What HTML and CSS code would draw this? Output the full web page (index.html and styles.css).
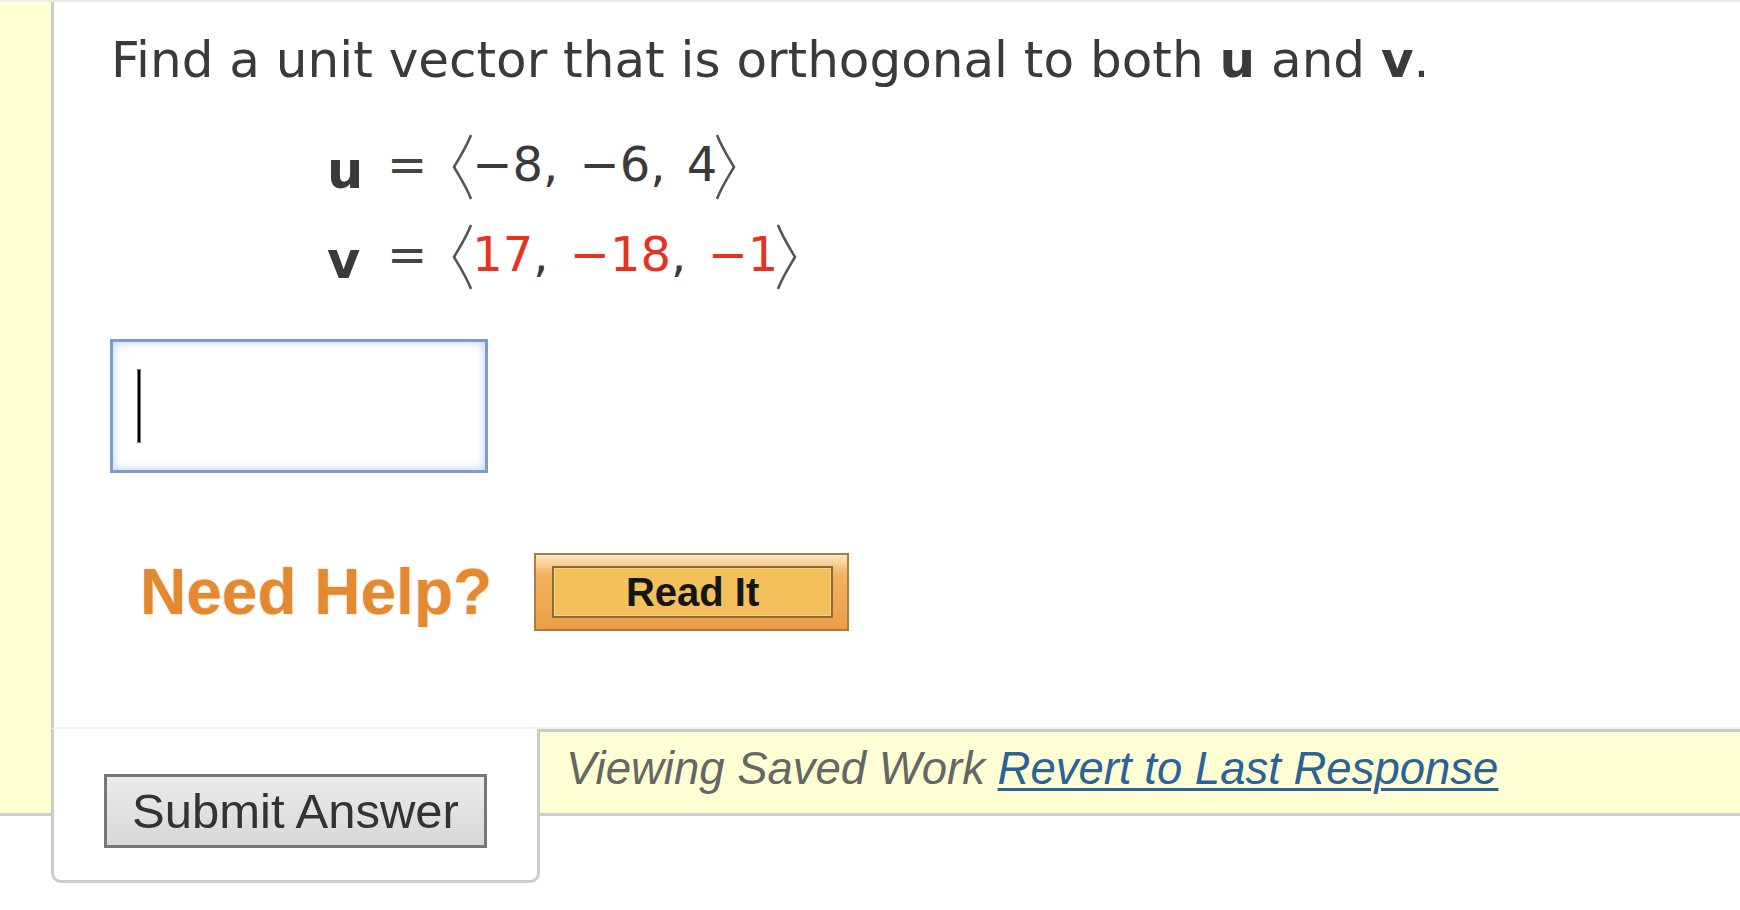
FILE: index.html
```html
<!DOCTYPE html>
<html lang="en">
<head>
    <meta charset="UTF-8">
    <meta name="viewport" content="width=device-width, initial-scale=1.0">
    <title>Unit Vector Question</title>
    <link rel="stylesheet" href="styles.css">
</head>
<body>
    <div class="frame">
        <div class="gutter"></div>
        <div class="main">
            <div class="question">
                <p class="prompt">Find a unit vector that is orthogonal to both <b>u</b> and <b>v</b>.</p>

                <div class="eq first"><span class="var">u</span><span class="eqsign">=</span><svg class="bracket" width="22" height="66" viewBox="0 0 22 66"><path d="M20 1 C15 14 7 26 3 33 C7 40 15 52 20 65"/></svg><span>−8, −6, 4</span><svg class="bracket close" width="22" height="66" viewBox="0 0 22 66"><path d="M2 1 C7 14 15 26 19 33 C15 40 7 52 2 65"/></svg></div>
                <div class="eq"><span class="var">v</span><span class="eqsign">=</span><svg class="bracket" width="22" height="66" viewBox="0 0 22 66"><path d="M20 1 C15 14 7 26 3 33 C7 40 15 52 20 65"/></svg><span class="num">17</span>, <span class="num">−18</span>, <span class="num">−1</span><svg class="bracket close" width="22" height="66" viewBox="0 0 22 66"><path d="M2 1 C7 14 15 26 19 33 C15 40 7 52 2 65"/></svg></div>

                <div class="answer-box"><span class="caret"></span></div>

                <div class="help">
                    <span class="need-help">Need Help?</span>
                    <button class="read-it"><span>Read It</span></button>
                </div>
            </div>

            <div class="footer">
                <div class="tab">
                    <button class="submit">Submit Answer</button>
                </div>
                <div class="saved">Viewing Saved Work <a href="#">Revert to Last Response</a></div>
            </div>
        </div>
    </div>
</body>
</html>
```

FILE: styles.css
```css
body {
    margin: 0;
    background-color: #fff;
    font-family: "DejaVu Sans", Verdana, sans-serif;
    color: #3a3a3a;
}
.frame {
    display: flex;
    align-items: flex-start;
    border-top: 2px solid #ededE4;
}
.gutter {
    width: 51px;
    height: 811px;
    background-color: #ffffd3;
    border-bottom: 3px solid #cccccc;
    flex-shrink: 0;
}
.main {
    flex: 1;
}
.question {
    box-sizing: border-box;
    height: 727px;
    padding: 28px 0 0 54px;
    border-left: 3px solid #cccccc;
    border-bottom: 2px solid #f1f1f1;
    background-color: #fff;
}
.prompt {
    margin: 0 0 0 3px;
    font-size: 50px;
    line-height: 60px;
}
.eq {
    padding-left: 219px;
    font-size: 48px;
    line-height: 90px;
    word-spacing: 6px;
    white-space: nowrap;
}
.eq.first {
    margin-top: 29px;
}
.var {
    display: inline-block;
    width: 60px;
    font-weight: bold;
    font-size: 51px;
    line-height: 1;
    vertical-align: -7px;
}
.eqsign {
    color: #444;
}
.bracket {
    vertical-align: -19px;
    margin-left: 24px;
    margin-right: -1px;
}
.bracket.close {
    margin-left: -2px;
    margin-right: 0;
}
.bracket path {
    fill: none;
    stroke: #555;
    stroke-width: 2.6;
}
.num {
    color: #e6321f;
}
.answer-box {
    box-sizing: border-box;
    width: 378px;
    height: 134px;
    margin: 40px 0 0 2px;
    padding: 27px 0 0 24px;
    border: 3px solid #7d9dc6;
    box-shadow: inset 0 0 7px 2px #c7dcf4;
    background-color: #fff;
}
.caret {
    display: block;
    width: 2px;
    height: 72px;
    background-color: #000;
    border: 1px solid #777;
}
.help {
    display: flex;
    align-items: center;
    margin-top: 80px;
    padding-left: 32px;
}
.need-help {
    font-family: "Liberation Sans", Arial, sans-serif;
    font-weight: bold;
    font-size: 64px;
    color: #e4892f;
    text-shadow: 0 0 2px rgba(228, 137, 47, 0.5);
}
.read-it {
    display: flex;
    box-sizing: border-box;
    width: 315px;
    height: 78px;
    margin-left: 42px;
    padding: 11px 14px 11px 16px;
    border: 2px solid #b27d3c;
    background: linear-gradient(#fde7c6 0%, #f2b462 25%, #eb9e47 100%);
    cursor: pointer;
}
.read-it span {
    flex: 1;
    display: flex;
    justify-content: center;
    align-items: center;
    border: 2px solid #8a6b3b;
    box-shadow: inset 0 0 0 1px #f7d584;
    background-color: #f2c15b;
    font-family: "Liberation Sans", Arial, sans-serif;
    font-weight: bold;
    font-size: 40px;
    color: #151515;
}
.footer {
    display: flex;
    align-items: flex-start;
}
.tab {
    box-sizing: border-box;
    width: 489px;
    padding: 45px 50px 32px 50px;
    border: 3px solid #cccccc;
    border-top: none;
    border-radius: 0 0 10px 10px;
    background-color: #fff;
    flex-shrink: 0;
}
.submit {
    display: block;
    box-sizing: border-box;
    width: 383px;
    height: 74px;
    padding: 0;
    border: 3px solid #777;
    background: linear-gradient(#ebebeb, #d8d8d8);
    font-family: "Liberation Sans", Arial, sans-serif;
    font-size: 49px;
    color: #333;
    cursor: pointer;
}
.saved {
    flex: 1;
    height: 81px;
    padding-left: 26px;
    border-top: 3px solid #cccccc;
    border-bottom: 3px solid #cccccc;
    background-color: #ffffd3;
    font-family: "Liberation Sans", Arial, sans-serif;
    font-style: italic;
    font-size: 45.5px;
    line-height: 74px;
    color: #666;
    white-space: nowrap;
}
.saved a {
    color: #2b6298;
    text-decoration-thickness: 3px;
    text-underline-offset: 4px;
}
```
